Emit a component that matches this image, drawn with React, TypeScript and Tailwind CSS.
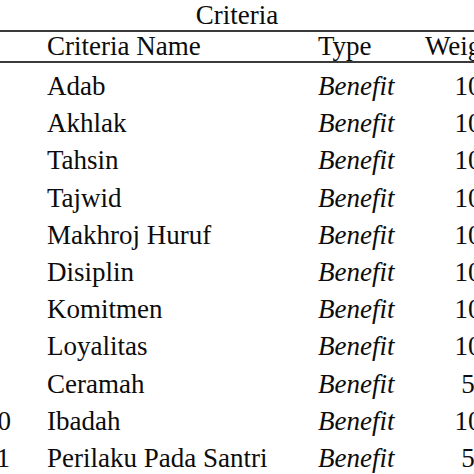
const rows = [
    { no: 1, name: "Adab", type: "Benefit", weight: 10 },
    { no: 2, name: "Akhlak", type: "Benefit", weight: 10 },
    { no: 3, name: "Tahsin", type: "Benefit", weight: 10 },
    { no: 4, name: "Tajwid", type: "Benefit", weight: 10 },
    { no: 5, name: "Makhroj Huruf", type: "Benefit", weight: 10 },
    { no: 6, name: "Disiplin", type: "Benefit", weight: 10 },
    { no: 7, name: "Komitmen", type: "Benefit", weight: 10 },
    { no: 8, name: "Loyalitas", type: "Benefit", weight: 10 },
    { no: 9, name: "Ceramah", type: "Benefit", weight: 5 },
    { no: 10, name: "Ibadah", type: "Benefit", weight: 10 },
    { no: 11, name: "Perilaku Pada Santri", type: "Benefit", weight: 5 },
];

export default function App() {
    return (
        <div
            className="w-[474px] h-[474px] overflow-hidden bg-white text-[#0c0c0c] text-[27px]"
            style={{ fontFamily: '"Liberation Serif", serif' }}
        >
            {/* Caption */}
            <div className="h-[30px] leading-[30px] text-center">Criteria</div>
            <div className="h-[2px] bg-[#3a3a3a]" />

            {/* Header row */}
            <div className="ml-[-16px] w-[600px] h-[29px] leading-[29px] grid grid-cols-[63px_271px_107px_86px]">
                <div />
                <div>Criteria Name</div>
                <div>Type</div>
                <div>Weight</div>
            </div>
            <div className="h-[2px] bg-[#3a3a3a]" />

            {/* Body */}
            <div className="pt-[5px] ml-[-16px] w-[600px] flex flex-col">
                {rows.map((r) => (
                    <div
                        key={r.no}
                        className="h-[37.2px] leading-[37.2px] grid grid-cols-[63px_271px_107px_86px] whitespace-nowrap"
                    >
                        <div>{r.no}</div>
                        <div>{r.name}</div>
                        <div className="italic">{r.type}</div>
                        <div className="text-center">{r.weight}</div>
                    </div>
                ))}
            </div>
        </div>
    );
}
